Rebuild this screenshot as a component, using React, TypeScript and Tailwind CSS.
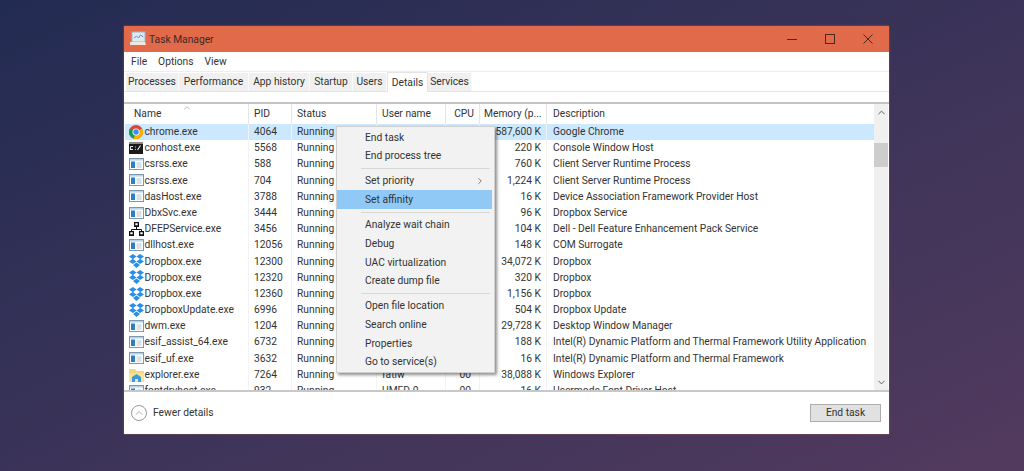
import React from "react";
import { ChevronUp, ChevronDown, ChevronRight } from "lucide-react";

type IconKind = "chrome" | "console" | "exe" | "net" | "dropbox" | "folder";

function RowIcon({ kind }: { kind: IconKind }) {
  if (kind === "chrome")
    return (
      <svg width="14" height="14" viewBox="0 0 24 24">
        <circle cx="12" cy="12" r="12" fill="#db4437" />
        <path d="M12 12 L1.6 6 A12 12 0 0 0 8 23.4 Z" fill="#0f9d58" />
        <path d="M12 12 L22.4 6 A12 12 0 0 1 8 23.4 Z" fill="#f4b400" />
        <circle cx="12" cy="12" r="6" fill="#fff" />
        <circle cx="12" cy="12" r="4.6" fill="#4285f4" />
      </svg>
    );
  if (kind === "console")
    return (
      <svg width="14" height="12" viewBox="0 0 14 12">
        <rect width="14" height="12" fill="#1a1a1a" />
        <rect y="0" width="14" height="2" fill="#8a8a8a" />
        <path d="M1.5 4.5h2.5M1.5 4.5v3h2.5M6 5h.8M6 7.5h.8M8.5 8l3-4.5" fill="none" stroke="#e8e8e8" strokeWidth="1.1" />
      </svg>
    );
  if (kind === "exe")
    return (
      <svg width="15" height="12" viewBox="0 0 15 12">
        <rect x="0.5" y="0.5" width="14" height="11" fill="#fff" stroke="#7f97ad" />
        <rect x="1" y="1" width="13" height="1.6" fill="#b9d3e8" />
        <rect x="2" y="3.5" width="4" height="6.5" fill="#2c7fc4" />
        <path d="M7.5 5h5M7.5 7h5M7.5 9h5" stroke="#b5c4d2" strokeWidth="1" />
      </svg>
    );
  if (kind === "net")
    return (
      <svg width="15" height="14" viewBox="0 0 15 14">
        <path d="M5 0h5v5H5zM0 9h5v5H0zM10 9h5v5h-5z" fill="#111" />
        <path d="M6.3 1.3h2.4v2H6.3zM1.3 10.3h2.4v2H1.3zM11.3 10.3h2.4v2h-2.4z" fill="#fff" />
        <path d="M7.5 5v2.5M2.5 9V7.5h10V9" fill="none" stroke="#111" />
      </svg>
    );
  if (kind === "dropbox")
    return (
      <svg width="15" height="14" viewBox="0 0 30 28">
        <path
          d="M8 0 L15 5 L8 10 L15 15 L8 20 L0 15 L7 10 L0 5 Z M22 0 L30 5 L23 10 L30 15 L22 20 L15 15 L22 10 L15 5 Z M8 22 L15 17 L22 22 L15 28 Z"
          fill="#2a8fe6"
        />
      </svg>
    );
  return (
    <svg width="15" height="14" viewBox="0 0 15 14">
      <path d="M0 1h6l1.5 2H15v11H0z" fill="#f5d77c" />
      <path d="M0 5h15v9H0z" fill="#f9e39b" />
      <path d="M3 14V9l4.5-3L12 9v5H9v-3H6v3z" fill="#3a9bd9" />
    </svg>
  );
}

type Row = [IconKind, string, string, string, string, string];

const rows: Row[] = [
  ["chrome", "chrome.exe", "4064", "fatiw", "587,600 K", "Google Chrome"],
  ["console", "conhost.exe", "5568", "fatiw", "220 K", "Console Window Host"],
  ["exe", "csrss.exe", "588", "SYSTEM", "760 K", "Client Server Runtime Process"],
  ["exe", "csrss.exe", "704", "SYSTEM", "1,224 K", "Client Server Runtime Process"],
  ["exe", "dasHost.exe", "3788", "SYSTEM", "16 K", "Device Association Framework Provider Host"],
  ["exe", "DbxSvc.exe", "3444", "SYSTEM", "96 K", "Dropbox Service"],
  ["net", "DFEPService.exe", "3456", "SYSTEM", "104 K", "Dell - Dell Feature Enhancement Pack Service"],
  ["exe", "dllhost.exe", "12056", "fatiw", "148 K", "COM Surrogate"],
  ["dropbox", "Dropbox.exe", "12300", "fatiw", "34,072 K", "Dropbox"],
  ["dropbox", "Dropbox.exe", "12320", "fatiw", "320 K", "Dropbox"],
  ["dropbox", "Dropbox.exe", "12360", "fatiw", "1,156 K", "Dropbox"],
  ["dropbox", "DropboxUpdate.exe", "6996", "SYSTEM", "504 K", "Dropbox Update"],
  ["exe", "dwm.exe", "1204", "DWM-1", "29,728 K", "Desktop Window Manager"],
  ["exe", "esif_assist_64.exe", "6732", "fatiw", "188 K", "Intel(R) Dynamic Platform and Thermal Framework Utility Application"],
  ["exe", "esif_uf.exe", "3632", "SYSTEM", "16 K", "Intel(R) Dynamic Platform and Thermal Framework"],
  ["folder", "explorer.exe", "7264", "fatiw", "38,088 K", "Windows Explorer"],
  ["exe", "fontdrvhost.exe", "932", "UMFD-0", "16 K", "Usermode Font Driver Host"],
];

const gridCols = "grid grid-cols-[124px_43px_85px_69px_34px_67px_327px]";

function Tab({ label, w }: { label: string; w: string }) {
  return (
    <div className={`${w} h-[18px] flex items-center justify-center bg-[#f0f0f0] border-r border-[#fafafa]`}>{label}</div>
  );
}

function MenuItem({ label, active, arrow }: { label: string; active?: boolean; arrow?: boolean }) {
  return (
    <div className={`h-[18.7px] flex items-center justify-between pl-[28px] pr-[7px] mr-[2px] ${active ? "bg-[#90c8f6]" : ""}`}>
      <span>{label}</span>
      {arrow && <ChevronRight size={10} strokeWidth={1.5} />}
    </div>
  );
}

function Sep() {
  return <div className="h-px ml-[24px] mr-[4px] my-[2.7px] bg-[#d7d7d7]" />;
}

export default function App() {
  return (
    <div className="h-[471px] w-full overflow-hidden pt-[26px] pl-[124px] bg-linear-to-br from-[#222b52] to-[#523a5e] text-[10.25px] text-[#333] font-['Roboto','Open_Sans',sans-serif]">
      <div className="relative w-[765px] h-[408px] flex flex-col bg-white shadow-[0_0_2px_rgba(190,90,70,0.8)]">
        <div className="h-[26px] shrink-0 flex items-center bg-[#e06a4a] pl-[5px] pr-[4px]">
          <svg width="18" height="16" viewBox="0 0 18 16">
            <rect x="3" y="1" width="13" height="10" fill="#dfe9f2" stroke="#9fb6c8" />
            <path d="M5 7l2.5-2 2 2 2-3 3 2" fill="none" stroke="#5d95c5" />
            <path d="M1 11h15l1 3H1z" fill="#f1e7df" />
          </svg>
          <span className="ml-[2px] mt-[2px] text-[#3a2a25]">Task Manager</span>
          <div className="ml-auto flex items-center gap-[28px] pr-[12px]">
            <svg width="10" height="10" viewBox="0 0 10 10"><path d="M0 5.5h10" stroke="#4a2a20" /></svg>
            <svg width="10" height="10" viewBox="0 0 10 10"><rect x="0.5" y="0.5" width="9" height="9" fill="none" stroke="#4a2a20" /></svg>
            <svg width="10" height="10" viewBox="0 0 10 10"><path d="M0.5 0.5l9 9M9.5 0.5l-9 9" stroke="#4a2a20" /></svg>
          </div>
        </div>

        <div className="h-[17px] shrink-0 flex items-center gap-[11px] pl-[7px] pt-[1px] pb-[1px] border-b border-[#ededed] box-content">
          <span>File</span>
          <span>Options</span>
          <span>View</span>
        </div>

        <div className="h-[20px] shrink-0 flex items-end pl-[2px] border-b border-[#e4e4e4]">
          <Tab label="Processes" w="w-[53px]" />
          <Tab label="Performance" w="w-[70px]" />
          <Tab label="App history" w="w-[61px]" />
          <Tab label="Startup" w="w-[43px]" />
          <Tab label="Users" w="w-[34px]" />
          <div className="w-[41px] h-[20px] flex items-start pt-[2px] justify-center bg-white border-x border-t border-[#e4e4e4] -mb-px">Details</div>
          <Tab label="Services" w="w-[44px]" />
        </div>

        <div className="h-[10px] shrink-0" />

        <div className="h-[290px] shrink-0 flex border-t-2 border-t-[#c4c4c4] border-b-2 border-b-[#c8c8c8] overflow-hidden">
          <div className="w-[750px] shrink-0 overflow-hidden pl-px">
            <div className={`${gridCols} h-[19.6px] items-center relative`}>
              <div className="pl-[9px] h-full flex items-center border-r border-[#e5e5e5]">Name</div>
              <div className="pl-[5px] h-full flex items-center border-r border-[#e5e5e5]">PID</div>
              <div className="pl-[5px] h-full flex items-center border-r border-[#e5e5e5]">Status</div>
              <div className="pl-[5px] h-full flex items-center border-r border-[#e5e5e5]">User name</div>
              <div className="pr-[5px] h-full flex items-center justify-end border-r border-[#e5e5e5]">CPU</div>
              <div className="pl-[4px] h-full flex items-center border-r border-[#e5e5e5] whitespace-nowrap overflow-hidden">Memory (p...</div>
              <div className="pl-[6px] h-full flex items-center">Description</div>
              <ChevronUp size={10} strokeWidth={1.2} className="absolute left-[57px] -top-[1px] text-[#777]" />
            </div>
            {rows.map((r, i) => (
              <div key={i} className={`${gridCols} h-[16.2px] items-center whitespace-nowrap ${i === 0 ? "bg-[#cce8ff]" : ""}`}>
                <div className="h-full flex items-center pl-[3px] border-r border-[#f3f3f3]">
                  <span className="w-[16.5px] shrink-0 flex items-center justify-center"><RowIcon kind={r[0]} /></span>
                  <span>{r[1]}</span>
                </div>
                <div className="h-full flex items-center pl-[5px] border-r border-[#f3f3f3]">{r[2]}</div>
                <div className="h-full flex items-center pl-[5px] border-r border-[#f3f3f3]">Running</div>
                <div className="h-full flex items-center pl-[5px] border-r border-[#f3f3f3]">{r[3]}</div>
                <div className="h-full flex items-center justify-end pr-[8px] border-r border-[#f3f3f3]">00</div>
                <div className="h-full flex items-center justify-end pr-[5px] border-r border-[#f3f3f3]">{r[4]}</div>
                <div className="h-full flex items-center pl-[6px]">{r[5]}</div>
              </div>
            ))}
          </div>
          <div className="w-[14px] shrink-0 flex flex-col items-stretch bg-[#f0f0f0]">
            <div className="h-[16px] flex items-center justify-center shrink-0"><ChevronUp size={11} strokeWidth={2} className="text-[#555]" /></div>
            <div className="h-[24px] shrink-0 mt-[23px] bg-[#cdcdcd]" />
            <div className="flex-1" />
            <div className="h-[16px] flex items-center justify-center shrink-0"><ChevronDown size={11} strokeWidth={2} className="text-[#555]" /></div>
          </div>
        </div>

        <div className="flex-1 flex items-center justify-between pl-[7px] pr-[8px]">
          <div className="flex items-center gap-[6px]">
            <span className="w-[16px] h-[16px] rounded-full border border-[#999] flex items-center justify-center">
              <ChevronUp size={12} strokeWidth={1.2} className="text-[#777]" />
            </span>
            <span>Fewer details</span>
          </div>
          <div className="w-[71px] h-[18px] flex items-center justify-center bg-[#e1e1e1] border border-[#adadad]">End task</div>
        </div>

        <div className="absolute left-[212px] top-[100px] w-[159px] h-[247px] py-px bg-[#f2f2f2] border border-[#d0d0d0] shadow-[2px_2px_3px_rgba(0,0,0,0.45)]">
          <MenuItem label="End task" />
          <MenuItem label="End process tree" />
          <Sep />
          <MenuItem label="Set priority" arrow />
          <MenuItem label="Set affinity" active />
          <Sep />
          <MenuItem label="Analyze wait chain" />
          <MenuItem label="Debug" />
          <MenuItem label="UAC virtualization" />
          <MenuItem label="Create dump file" />
          <Sep />
          <MenuItem label="Open file location" />
          <MenuItem label="Search online" />
          <MenuItem label="Properties" />
          <MenuItem label="Go to service(s)" />
        </div>
      </div>
    </div>
  );
}
